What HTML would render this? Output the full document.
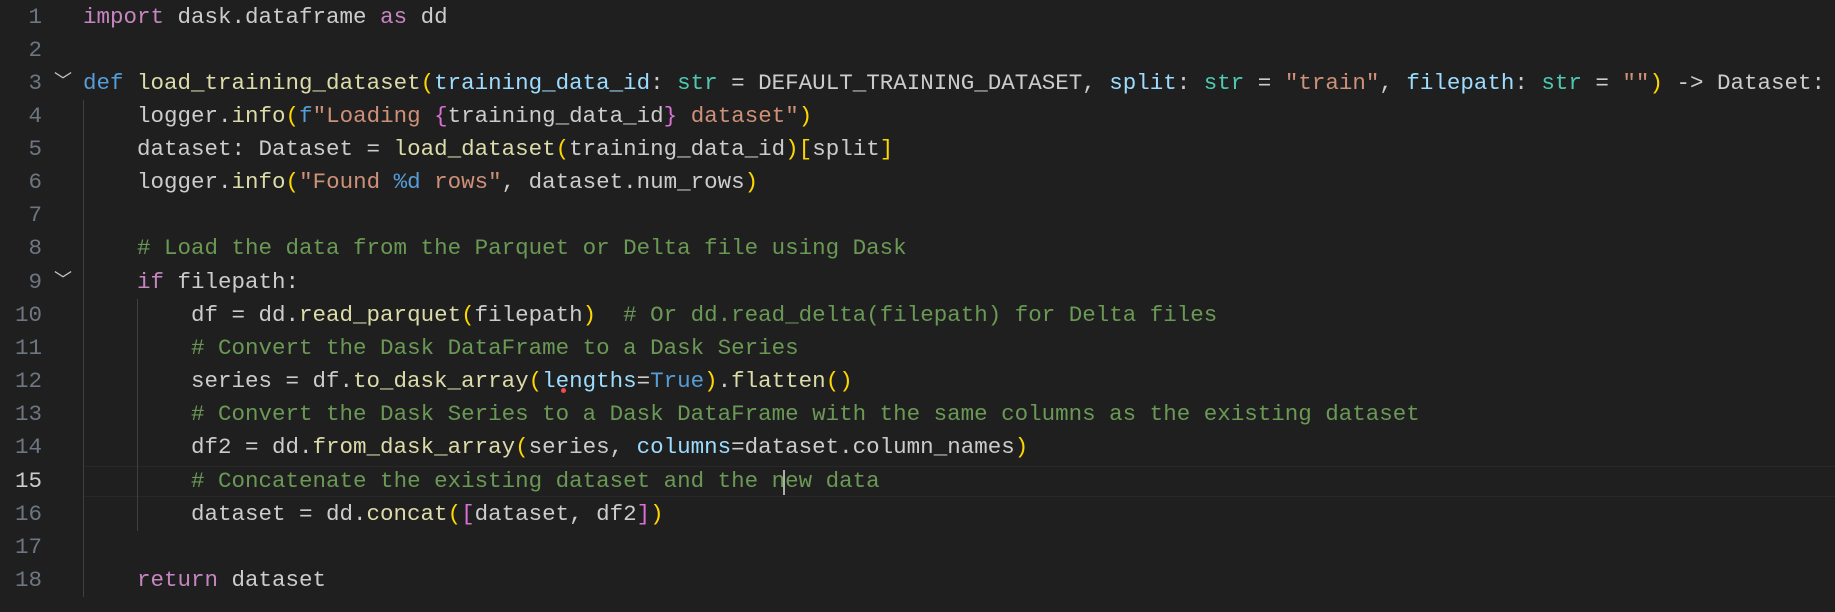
<!DOCTYPE html>
<html><head><meta charset="utf-8"><style>
body{margin:0;background:#1f1f1f;width:1835px;height:612px;overflow:hidden;font-family:"Liberation Mono",monospace;font-size:22.5px;}
.l{position:absolute;left:0;height:33px;line-height:33px;width:1835px;white-space:pre;}
.n{position:absolute;right:1793px;color:#6e7681;}
.c{position:absolute;left:83px;color:#cccccc;}
.f{position:absolute;left:54px;top:0;color:#c5c5c5;font-size:18px;}
.g{position:absolute;width:1px;background:#404040;}
.k{color:#c586c0}.b{color:#569cd6}.y{color:#dcdcaa}.p{color:#9cdcfe}.t{color:#4ec9b0}.s{color:#ce9178}.m{color:#6a9955}.o{color:#ffd700}.q{color:#da70d6}
</style></head><body>
<div class="l" style="top:466px;height:31px;border-top:1px solid #282828;border-bottom:1px solid #282828;box-sizing:border-box;left:83px;width:1752px"></div>
<div class="g" style="left:83px;top:100px;height:497px"></div>
<div class="g" style="left:137px;top:299px;height:232px"></div>
<div class="l" style="top:1px"><span class="n">1</span><span class="c"><span class="k">import</span> dask.dataframe <span class="k">as</span> dd</span></div>
<div class="l" style="top:34px"><span class="n">2</span></div>
<div class="l" style="top:67px"><span class="n">3</span><span class="f">﹀</span><span class="c"><span class="b">def</span> <span class="y">load_training_dataset</span><span class="o">(</span><span class="p">training_data_id</span>: <span class="t">str</span> = DEFAULT_TRAINING_DATASET, <span class="p">split</span>: <span class="t">str</span> = <span class="s">"train"</span>, <span class="p">filepath</span>: <span class="t">str</span> = <span class="s">""</span><span class="o">)</span> -&gt; Dataset:</span></div>
<div class="l" style="top:100px"><span class="n">4</span><span class="c">    logger.<span class="y">info</span><span class="o">(</span><span class="b">f</span><span class="s">"Loading </span><span class="q">{</span>training_data_id<span class="q">}</span><span class="s"> dataset"</span><span class="o">)</span></span></div>
<div class="l" style="top:133px"><span class="n">5</span><span class="c">    dataset: Dataset = <span class="y">load_dataset</span><span class="o">(</span>training_data_id<span class="o">)</span><span class="o">[</span>split<span class="o">]</span></span></div>
<div class="l" style="top:166px"><span class="n">6</span><span class="c">    logger.<span class="y">info</span><span class="o">(</span><span class="s">"Found </span><span class="b">%d</span><span class="s"> rows"</span>, dataset.num_rows<span class="o">)</span></span></div>
<div class="l" style="top:199px"><span class="n">7</span></div>
<div class="l" style="top:232px"><span class="n">8</span><span class="c">    <span class="m"># Load the data from the Parquet or Delta file using Dask</span></span></div>
<div class="l" style="top:266px"><span class="n">9</span><span class="f">﹀</span><span class="c">    <span class="k">if</span> filepath:</span></div>
<div class="l" style="top:299px"><span class="n">10</span><span class="c">        df = dd.<span class="y">read_parquet</span><span class="o">(</span>filepath<span class="o">)</span>  <span class="m"># Or dd.read_delta(filepath) for Delta files</span></span></div>
<div class="l" style="top:332px"><span class="n">11</span><span class="c">        <span class="m"># Convert the Dask DataFrame to a Dask Series</span></span></div>
<div class="l" style="top:365px"><span class="n">12</span><span class="c">        series = df.<span class="y">to_dask_array</span><span class="o">(</span><span class="p">lengths</span>=<span class="b">True</span><span class="o">)</span>.<span class="y">flatten</span><span class="o">()</span></span></div>
<div class="l" style="top:398px"><span class="n">13</span><span class="c">        <span class="m"># Convert the Dask Series to a Dask DataFrame with the same columns as the existing dataset</span></span></div>
<div class="l" style="top:431px"><span class="n">14</span><span class="c">        df2 = dd.<span class="y">from_dask_array</span><span class="o">(</span>series, <span class="p">columns</span>=dataset.column_names<span class="o">)</span></span></div>
<div class="l" style="top:465px"><span class="n" style="color:#cccccc">15</span><span class="c">        <span class="m"># Concatenate the existing dataset and the new data</span></span></div>
<div class="l" style="top:498px"><span class="n">16</span><span class="c">        dataset = dd.<span class="y">concat</span><span class="o">(</span><span class="q">[</span>dataset, df2<span class="q">]</span><span class="o">)</span></span></div>
<div class="l" style="top:531px"><span class="n">17</span></div>
<div class="l" style="top:564px"><span class="n">18</span><span class="c">    <span class="k">return</span> dataset</span></div>
<div style="position:absolute;left:783px;top:470px;width:2px;height:25px;background:#aeafad"></div>
<div style="position:absolute;left:561px;top:388px;width:5px;height:5px;border-radius:50%;background:#f14c4c"></div>
</body></html>
